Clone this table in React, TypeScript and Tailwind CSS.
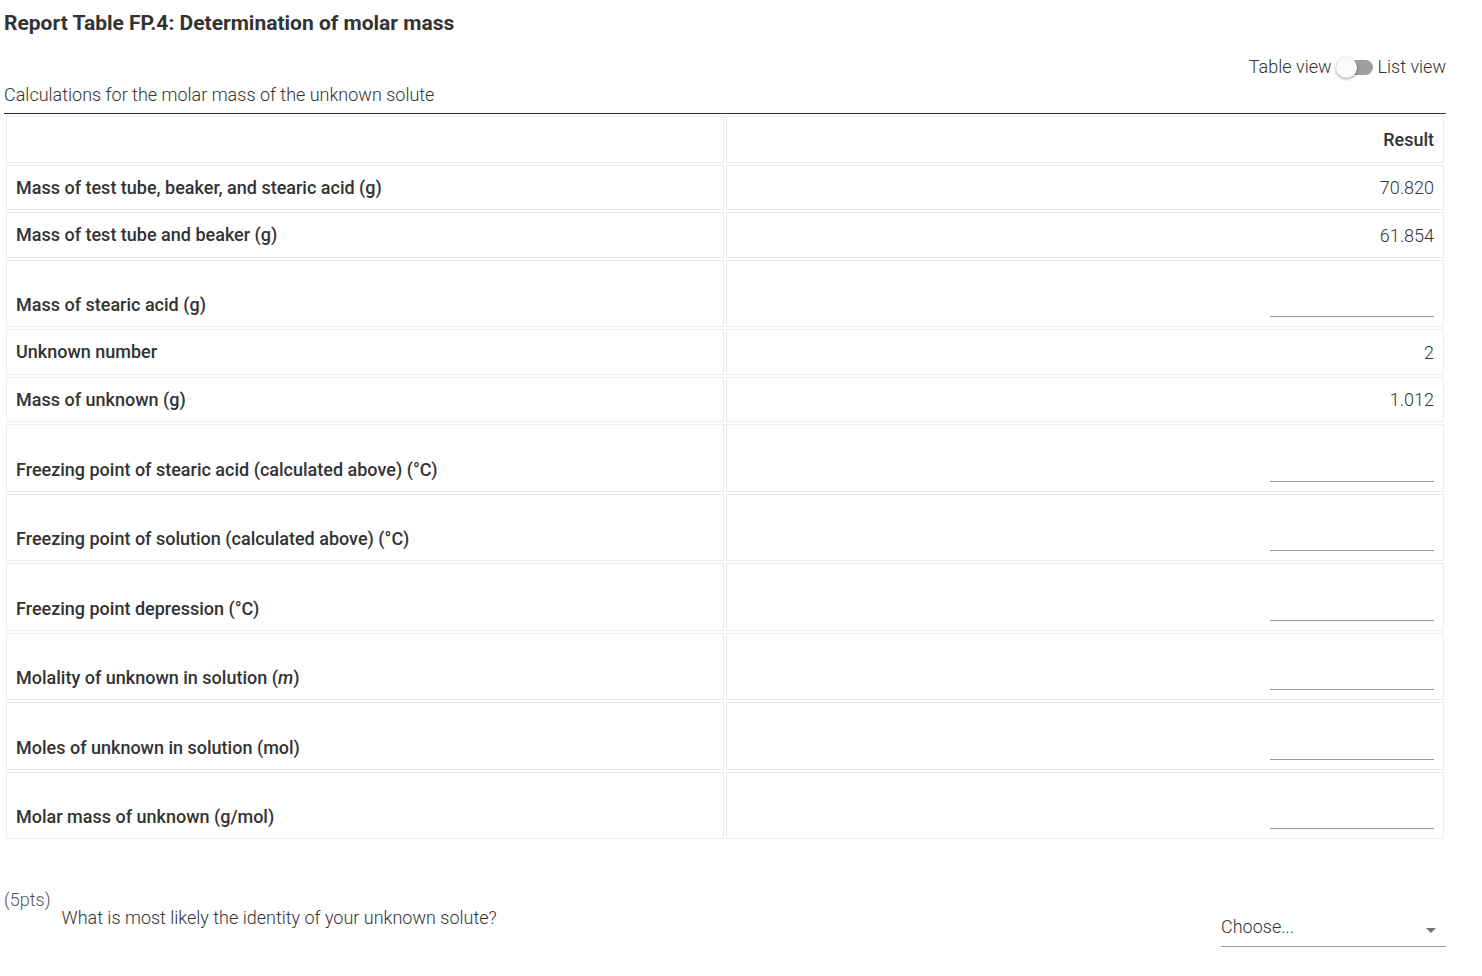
import { useState } from "react"

type Row = { label: React.ReactNode; value?: string; input?: boolean; h: string }

const rows: Row[] = [
  { label: "Mass of test tube, beaker, and stearic acid (g)", value: "70.820", h: "h-[45px]" },
  { label: "Mass of test tube and beaker (g)", value: "61.854", h: "h-[46px]" },
  { label: "Mass of stearic acid (g)", input: true, h: "h-[67px]" },
  { label: "Unknown number", value: "2", h: "h-[46px]" },
  { label: "Mass of unknown (g)", value: "1.012", h: "h-[45px]" },
  { label: "Freezing point of stearic acid (calculated above) (°C)", input: true, h: "h-[68px]" },
  { label: "Freezing point of solution (calculated above) (°C)", input: true, h: "h-[67px]" },
  { label: "Freezing point depression (°C)", input: true, h: "h-[68px]" },
  {
    label: (
      <>
        Molality of unknown in solution (<i>m</i>)
      </>
    ),
    input: true,
    h: "h-[67px]",
  },
  { label: "Moles of unknown in solution (mol)", input: true, h: "h-[68px]" },
  { label: "Molar mass of unknown (g/mol)", input: true, h: "h-[67px]" },
]

function Toggle() {
  const [on, setOn] = useState(true)
  return (
    <button
      onClick={() => setOn(!on)}
      className="relative ml-[4px] mr-[5px] h-[22px] w-[37px] shrink-0"
      aria-label="Toggle view"
    >
      <span className="absolute left-[8px] right-0 top-[4px] h-[15px] rounded-full bg-[#9e9e9e]" />
      <span className="absolute left-0 top-[1px] h-[21px] w-[21px] rounded-full bg-[#fafafa] shadow-[0_1px_3px_rgba(0,0,0,0.4)]" />
    </button>
  )
}

export default function App() {
  return (
    <div className="min-h-screen bg-white px-[4px] pt-[9px] font-['Roboto','Liberation_Sans',sans-serif] text-[#333]">
      <div className="w-[1442px]">
        <h1 className="text-[21px] font-bold leading-[28px] text-[#333]">
          Report Table FP.4: Determination of molar mass
        </h1>

        <div className="mt-[18px] flex items-center justify-end text-[18px] font-light leading-[24px] text-[#333]">
          <span>Table view</span>
          <Toggle />
          <span>List view</span>
        </div>

        <div className="mt-[4px] border-b border-[#333] pb-[6px] text-[18px] font-light leading-[24px] text-[#333]">
          Calculations for the molar mass of the unknown solute
        </div>

        <table className="w-[1442px] table-fixed border-separate border-spacing-[2px] text-[18px]">
          <thead>
            <tr>
              <th className="h-[47px] w-[718px] border border-[#ecece8]" />
              <th className="h-[47px] w-[718px] border border-[#ecece8] px-[9px] text-right font-medium text-[#333]">
                Result
              </th>
            </tr>
          </thead>
          <tbody>
            {rows.map((r, i) => (
              <tr key={i}>
                <td
                  className={`${r.h} border border-[#ecece8] px-[9px] font-medium text-[#333] ${
                    r.input ? "pb-[8px] align-bottom" : "align-middle"
                  }`}
                >
                  <div className="leading-[26px]">{r.label}</div>
                </td>
                <td
                  className={`${r.h} border border-[#ecece8] px-[9px] text-right font-light text-[#333] ${
                    r.input ? "pb-[9px] align-bottom" : "align-middle"
                  }`}
                >
                  {r.input ? (
                    <input
                      type="text"
                      className="ml-auto block h-[28px] w-[164px] border-b border-[#9a9a9a] bg-transparent text-right outline-none"
                    />
                  ) : (
                    r.value
                  )}
                </td>
              </tr>
            ))}
          </tbody>
        </table>

        <div className="mt-[46px] flex items-start justify-between text-[18px] font-light leading-[26px] text-[#333]">
          <div className="flex items-start">
            <span className="text-[#555]">(5pts)</span>
            <span className="ml-[11px] mt-[18px]">
              What is most likely the identity of your unknown solute?
            </span>
          </div>
          <div className="mt-[20px] flex h-[40px] w-[225px] items-center justify-between border-b border-[#9a9a9a]">
            <span className="text-[#333]">Choose...</span>
            <svg width="10" height="5" viewBox="0 0 10 5" className="mr-[10px] mt-[8px]">
              <path d="M0 0 L10 0 L5 5 Z" fill="#757575" />
            </svg>
          </div>
        </div>
      </div>
    </div>
  )
}
